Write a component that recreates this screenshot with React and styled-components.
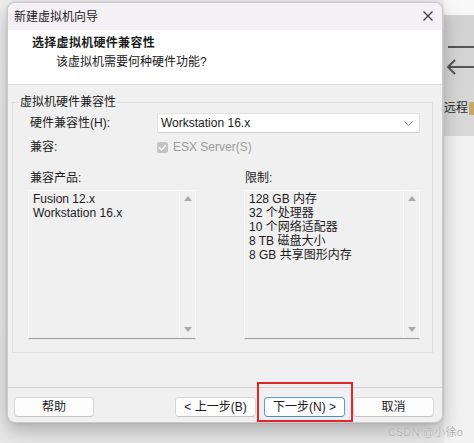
import React from "react";
import styled, { createGlobalStyle } from "styled-components";

const GlobalStyle = createGlobalStyle`
  html, body { margin: 0; padding: 0; }
  body {
    width: 474px;
    height: 443px;
    overflow: hidden;
    background: #ececec;
    font-family: "Liberation Sans", "Noto Sans CJK SC", sans-serif;
    color: #1b1b1b;
  }
`;

/* ---------- desktop and the app window behind the dialog ---------- */

const Desktop = styled.div`
  position: relative;
  width: 474px;
  height: 443px;
  display: flex;
  justify-content: flex-end;
  background: linear-gradient(#eeeeee, #e9e9e9);
  overflow: hidden;
`;

const AppStrip = styled.div`
  width: 30px;
  display: flex;
  flex-direction: column;
  background: #f2f2f2;
`;

const StripTop = styled.div`
  height: 15px;
  background: #f8f8f8;
`;

const StripToolbar = styled.div`
  height: 121px;
  display: flex;
  flex-direction: column;
  padding-top: 30px;
  box-sizing: border-box;
  background: linear-gradient(#d2d2d2, #d9d9d9);
`;

const StripLabel = styled.div`
  display: flex;
  align-items: center;
  margin-top: 25px;
  font-size: 12px;
  line-height: 16px;
  color: #2a2a2a;
  white-space: nowrap;
`;

const Highlight = styled.span`
  width: 6px;
  height: 13px;
  margin-left: 1px;
  background: #c9a766;
`;

const Watermark = styled.div`
  position: absolute;
  right: 11px;
  bottom: 4px;
  font-size: 11px;
  line-height: 14px;
  color: #b0b0b0;
  text-shadow: 0 0 1px #ffffff;
  letter-spacing: 0.2px;
`;

/* ---------- dialog window ---------- */

const Window = styled.div`
  position: absolute;
  left: 7px;
  top: 2px;
  width: 436px;
  height: 421px;
  box-sizing: border-box;
  display: flex;
  flex-direction: column;
  border: 1px solid #c9c9c9;
  border-radius: 8px;
  overflow: hidden;
  background: #f0f0f0;
  box-shadow: 0 8px 20px rgba(0, 0, 0, 0.26), 0 0 3px rgba(0, 0, 0, 0.12);
`;

const TitleBar = styled.div`
  height: 27px;
  flex: none;
  display: flex;
  align-items: center;
  justify-content: space-between;
  padding: 0 9px 2px 6px;
  box-sizing: border-box;
  background: #f3f1f6;
  font-size: 12px;
`;

const CloseButton = styled.span`
  display: flex;
  width: 10px;
  height: 10px;
`;

const Header = styled.div`
  height: 55px;
  flex: none;
  box-sizing: border-box;
  padding: 4px 0 0 24px;
  background: #ffffff;
  border-bottom: 1px solid #dcdcdc;
`;

const Heading = styled.div`
  font-size: 12px;
  line-height: 18px;
  font-weight: 700;
  letter-spacing: 0.3px;
`;

const SubHeading = styled.div`
  margin-top: 1px;
  padding-left: 24px;
  font-size: 12px;
  line-height: 18px;
`;

const Body = styled.div`
  flex: 1;
  padding: 9px 9px 0 4px;
`;

const GroupBox = styled.fieldset`
  margin: 0;
  padding: 0;
  min-width: 0;
  border: 1px solid #dedede;
`;

const GroupTitle = styled.legend`
  margin-left: 6px;
  padding: 0 1px;
  font-size: 12px;
  line-height: 16px;
`;

const GroupContent = styled.div`
  padding: 3px 12px 13px 15px;
`;

const FormGrid = styled.div`
  display: grid;
  grid-template-columns: 129px 1fr;
  grid-auto-rows: 20px;
  row-gap: 4px;
  align-items: center;
`;

const FieldLabel = styled.div`
  padding-left: ${(p) => p.$indent || 2}px;
  font-size: 12px;
  line-height: 16px;
`;

const Select = styled.div`
  height: 20px;
  box-sizing: border-box;
  display: flex;
  align-items: center;
  justify-content: space-between;
  padding: 0 6px 0 3px;
  background: #ffffff;
  border: 1px solid #e1e1e1;
  border-bottom-color: #cfcfcf;
  border-radius: 2px;
  font-size: 12px;
`;

const CheckRow = styled.div`
  display: flex;
  align-items: center;
  gap: 5px;
  font-size: 12px;
  color: #9c9c9c;
`;

const CheckBox = styled.span`
  width: 11px;
  height: 11px;
  display: flex;
  align-items: center;
  justify-content: center;
  border-radius: 2px;
  background: #c4c4c4;
`;

const ListsGrid = styled.div`
  display: grid;
  grid-template-columns: 168px 176px;
  column-gap: 48px;
  margin-top: 13px;
`;

const ListColumn = styled.div`
  display: flex;
  flex-direction: column;
  gap: 4px;
`;

const ListBox = styled.div`
  height: 149px;
  box-sizing: border-box;
  display: flex;
  border: 1px solid #fafafa;
  border-bottom-color: #9a9a9a;
  background: #f0f0f0;
`;

const ListItems = styled.div`
  flex: 1;
  padding: 1px 4px;
  font-size: 12px;
  line-height: 14px;
  white-space: nowrap;
`;

const ScrollTrack = styled.div`
  width: 16px;
  box-sizing: border-box;
  display: flex;
  flex-direction: column;
  align-items: center;
  justify-content: space-between;
  padding: 5px 0 6px;
  border-left: 1px solid #fafafa;
`;

const Arrow = styled.span`
  width: 0;
  height: 0;
  border-left: 4px solid transparent;
  border-right: 4px solid transparent;
  ${(p) =>
    p.$down
      ? "border-top: 5px solid #a8a8a8;"
      : "border-bottom: 5px solid #a8a8a8;"}
`;

const Footer = styled.div`
  height: 35px;
  flex: none;
  box-sizing: border-box;
  display: flex;
  align-items: flex-start;
  padding: 9px 8px 0 6px;
  border-top: 1px solid #d2d2d2;
`;

const ButtonGroup = styled.div`
  margin-left: auto;
  display: flex;
  gap: 8px;
`;

const Button = styled.button`
  width: ${(p) => p.$width || 81}px;
  height: 20px;
  box-sizing: border-box;
  padding: 0;
  background: #fdfdfd;
  border: 1px solid ${(p) => (p.$primary ? "#5d9bd6" : "#d6d6d6")};
  border-bottom-color: ${(p) => (p.$primary ? "#4a8bcb" : "#c3c3c3")};
  border-radius: 4px;
  font-family: inherit;
  font-size: 12px;
  line-height: 18px;
  color: #1b1b1b;
`;

const Marked = styled.span`
  position: relative;
  display: flex;

  &::after {
    content: "";
    position: absolute;
    left: -7px;
    right: -8px;
    top: -15px;
    bottom: -5px;
    border: 2px solid #e2262b;
    pointer-events: none;
  }
`;

const products = ["Fusion 12.x", "Workstation 16.x"];
const limits = [
  "128 GB 内存",
  "32 个处理器",
  "10 个网络适配器",
  "8 TB 磁盘大小",
  "8 GB 共享图形内存",
];

function ScrollList({ items }) {
  return (
    <ListBox>
      <ListItems>
        {items.map((it) => (
          <div key={it}>{it}</div>
        ))}
      </ListItems>
      <ScrollTrack>
        <Arrow />
        <Arrow $down />
      </ScrollTrack>
    </ListBox>
  );
}

export default function App() {
  return (
    <>
      <GlobalStyle />
      <Desktop>
        <AppStrip>
          <StripTop />
          <StripToolbar>
            <svg width="30" height="30" viewBox="0 0 30 30">
              <line x1="4" y1="2" x2="30" y2="2" stroke="#555" strokeWidth="2" />
              <line x1="4" y1="22" x2="30" y2="22" stroke="#555" strokeWidth="2" />
              <polyline
                points="11,15 4,22 11,29"
                fill="none"
                stroke="#555"
                strokeWidth="2"
              />
            </svg>
            <StripLabel>
              远程
              <Highlight />
            </StripLabel>
          </StripToolbar>
        </AppStrip>

        <Window>
          <TitleBar>
            <span>新建虚拟机向导</span>
            <CloseButton>
              <svg width="10" height="10" viewBox="0 0 10 10">
                <path d="M0.5 0.5 L9.5 9.5 M9.5 0.5 L0.5 9.5" stroke="#333" strokeWidth="1.1" />
              </svg>
            </CloseButton>
          </TitleBar>

          <Header>
            <Heading>选择虚拟机硬件兼容性</Heading>
            <SubHeading>该虚拟机需要何种硬件功能?</SubHeading>
          </Header>

          <Body>
            <GroupBox>
              <GroupTitle>虚拟机硬件兼容性</GroupTitle>
              <GroupContent>
                <FormGrid>
                  <FieldLabel>硬件兼容性(H):</FieldLabel>
                  <Select>
                    <span>Workstation 16.x</span>
                    <svg width="9" height="5" viewBox="0 0 9 5">
                      <polyline points="0.5,0.5 4.5,4.5 8.5,0.5" fill="none" stroke="#808080" strokeWidth="1" />
                    </svg>
                  </Select>
                  <FieldLabel>兼容:</FieldLabel>
                  <CheckRow>
                    <CheckBox>
                      <svg width="9" height="7" viewBox="0 0 9 7">
                        <polyline points="1,3.5 3.5,6 8,1" fill="none" stroke="#ffffff" strokeWidth="1.3" />
                      </svg>
                    </CheckBox>
                    <span>ESX Server(S)</span>
                  </CheckRow>
                </FormGrid>

                <ListsGrid>
                  <ListColumn>
                    <FieldLabel>兼容产品:</FieldLabel>
                    <ScrollList items={products} />
                  </ListColumn>
                  <ListColumn>
                    <FieldLabel $indent={1}>限制:</FieldLabel>
                    <ScrollList items={limits} />
                  </ListColumn>
                </ListsGrid>
              </GroupContent>
            </GroupBox>
          </Body>

          <Footer>
            <Button $width={80}>帮助</Button>
            <ButtonGroup>
              <Button>&lt; 上一步(B)</Button>
              <Marked>
                <Button $primary>下一步(N) &gt;</Button>
              </Marked>
              <Button>取消</Button>
            </ButtonGroup>
          </Footer>
        </Window>

        <Watermark>CSDN @小徐o</Watermark>
      </Desktop>
    </>
  );
}
